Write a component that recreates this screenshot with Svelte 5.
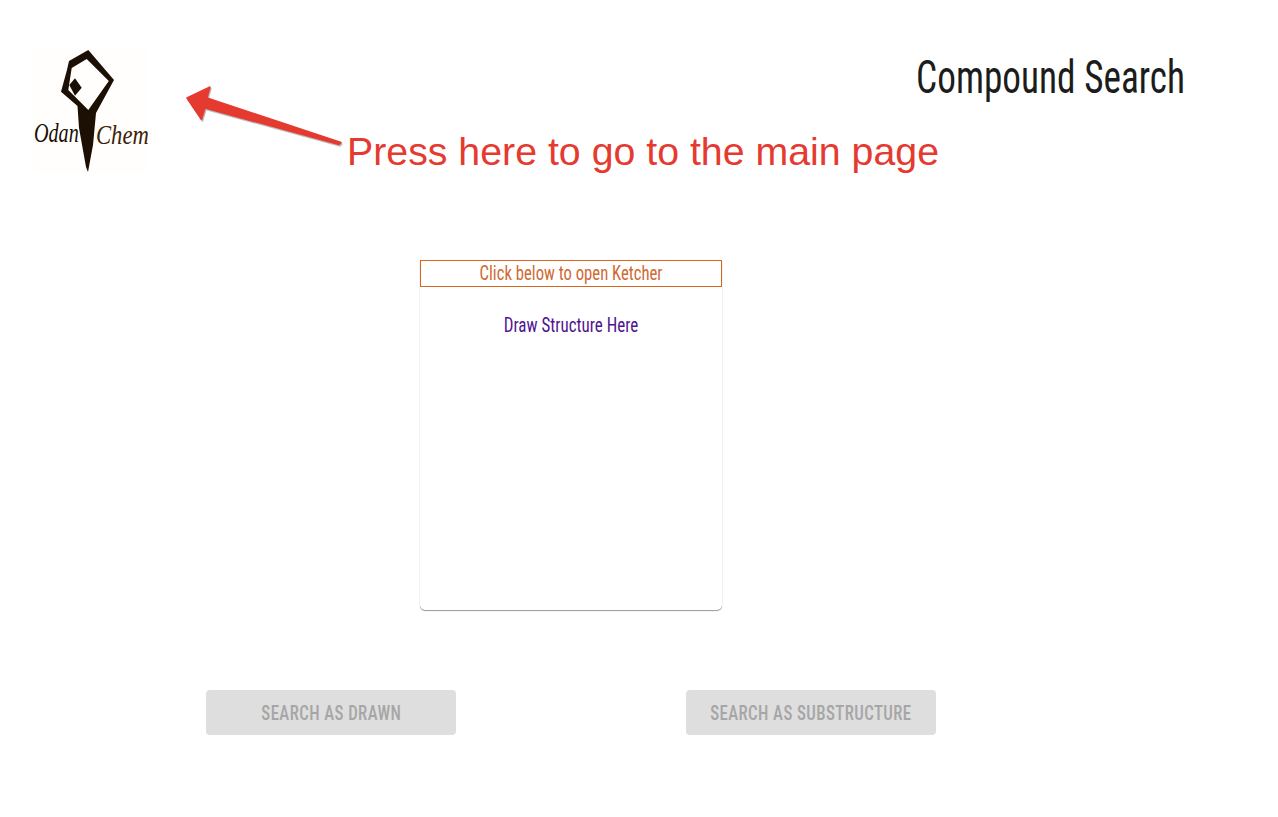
<script>
  const buttons = ["Search as drawn", "Search as substructure"];
  const arrow = "M2 13 L25 2 L22 13 L156 57.5 L154 59.5 L20 23 L16.5 34.5 Z";
</script>

<div class="page">
  <header class="top">
    <a class="logo" href="#main" aria-label="OdanChem main page">
      <svg width="115" height="126" viewBox="0 0 115 126">
        <rect width="115" height="126" fill="#fffefc" />
        <path d="M55.3 3 L36 14 L33.7 24 L28 44.7 L44.5 59 L46 81 L53 120 L55 125 L60 98 L63 66 L81 33 Z M53.7 12 L38.7 21 L35.3 43 L55.3 63 L75.8 34 Z" fill="#1c0f04" fill-rule="evenodd" />
        <path d="M42 31.3 L48.7 40.7 L42 48.7 L36.3 38 Z" fill="#1a0f05" />
        <text class="logo-left" transform="translate(1 95) scale(0.72 1)">Odan</text>
        <text class="logo-right" transform="translate(63 97) scale(0.84 1)">Chem</text>
      </svg>
    </a>
    <h1><span>Compound Search</span></h1>
  </header>

  <div class="note">
    <svg class="arrow" width="170" height="70" viewBox="0 0 170 70">
      <path d={arrow} fill="#bdbdbd" stroke="#bdbdbd" stroke-width="1.5" stroke-linejoin="round" transform="translate(1 1.5)" />
      <path d={arrow} fill="#e53a30" stroke="#e53a30" stroke-width="1.5" stroke-linejoin="round" />
    </svg>
    <span>Press here to go to the main page</span>
  </div>

  <section class="sketch">
    <div class="card">
      <div class="card-title"><span>Click below to open Ketcher</span></div>
      <p class="hint"><span>Draw Structure Here</span></p>
    </div>
  </section>

  <div class="actions">
    {#each buttons as label}
      <button disabled><span>{label}</span></button>
    {/each}
  </div>
</div>

<style>
  :global(body) {
    background: #fff;
    font-family: "Liberation Sans Narrow", "Roboto Condensed", Roboto, "Liberation Sans", sans-serif;
  }

  .page {
    position: relative;
    width: 1278px;
    height: 817px;
    overflow: hidden;
  }

  .top {
    display: flex;
    justify-content: space-between;
    align-items: flex-start;
    padding: 47px 93px 0 33px;
  }

  .logo {
    display: block;
    height: 126px;
  }

  .logo svg {
    display: block;
  }

  .logo-left,
  .logo-right {
    font-family: "Liberation Serif", serif;
    font-style: italic;
    fill: #1a0f05;
  }

  .logo-left {
    font-size: 28px;
  }

  .logo-right {
    font-size: 27px;
    fill: #3a2208;
  }

  h1 {
    margin: 2px 0 0;
    font-weight: 400;
    font-size: 46px;
    line-height: 56px;
    color: #1c1c1c;
  }

  h1 span,
  .card-title span,
  .hint span,
  button span {
    display: inline-block;
    white-space: nowrap;
  }

  h1 span {
    transform: scaleX(0.81);
    transform-origin: right center;
  }

  .note {
    position: absolute;
    left: 185px;
    top: 85px;
  }

  .arrow {
    display: block;
  }

  .note span {
    position: absolute;
    left: 162px;
    top: 43px;
    white-space: nowrap;
    font-family: "Liberation Sans", sans-serif;
    font-size: 39.3px;
    line-height: 46px;
    color: #e53a30;
  }

  .sketch {
    display: flex;
    padding: 87px 0 0 420px;
  }

  .card {
    width: 302px;
    height: 350px;
    box-sizing: border-box;
    background: #fff;
    border-radius: 0 0 5px 5px;
    box-shadow: 0 1px 1px rgba(0, 0, 0, 0.4), 0 0 1px rgba(0, 0, 0, 0.14);
    text-align: center;
  }

  .card-title {
    height: 27px;
    box-sizing: border-box;
    border: 1px solid #d9661f;
    font-size: 21px;
    line-height: 25px;
    color: #cf6a33;
  }

  .card-title span {
    transform: scaleX(0.795);
  }

  .hint {
    margin: 25px 0 0;
    font-size: 21px;
    line-height: 26px;
    color: #4f1590;
  }

  .hint span {
    transform: scaleX(0.81);
  }

  .actions {
    display: flex;
    gap: 230px;
    padding: 80px 0 0 206px;
  }

  button {
    width: 250px;
    height: 45px;
    padding: 0;
    border: 0;
    border-radius: 4px;
    background: #dedede;
    color: #a6a6a6;
    font: inherit;
    font-size: 20px;
    font-weight: 500;
    letter-spacing: 0.5px;
    text-transform: uppercase;
  }

  button span {
    transform: scaleX(0.84);
  }
</style>
